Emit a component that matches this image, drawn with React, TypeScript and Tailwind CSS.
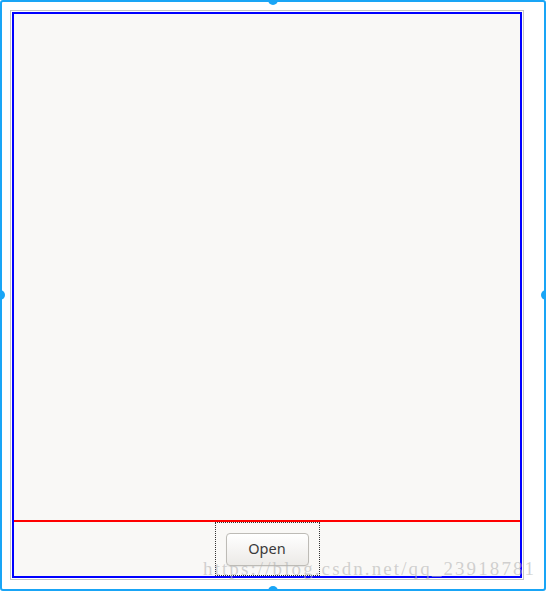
import React from "react";

export default function App() {
  return (
    <div className="relative w-[546px] h-[591px] overflow-hidden bg-white">
      <div className="absolute inset-0 rounded-[3px] border-2 border-[#19a5f6]" />
      {/* handles */}
      <div className="absolute left-[268px] top-[-5px] w-[10px] h-[10px] rounded-full bg-[#19a5f6]" />
      <div className="absolute left-[268px] top-[586px] w-[10px] h-[10px] rounded-full bg-[#19a5f6]" />
      <div className="absolute left-[-5px] top-[290px] w-[10px] h-[10px] rounded-full bg-[#19a5f6]" />
      <div className="absolute left-[541px] top-[290px] w-[10px] h-[10px] rounded-full bg-[#19a5f6]" />

      <div className="flex pl-[10px] pt-[10px]">
        <div className="w-[514px] h-[570px] border border-[#c4c4c4] p-[1px] flex">
          <div className="flex-1 flex flex-col border-2 border-[#0000ff] bg-[#f9f8f6]">
            <div className="flex-1" />
            <div className="h-[2px] bg-[#ff0000]" />
            <div className="h-[54px] flex justify-center">
              <div className="w-[105px] h-full border border-dotted border-[#333] flex items-center justify-center">
                <button className="w-[83px] h-[33px] rounded-[4px] border border-[#bdbbb6] bg-gradient-to-b from-[#ffffff] to-[#eceae7] text-[14.5px] text-[#3a3a3a] shadow-[0_1px_1px_rgba(0,0,0,0.08)] [font-family:'Noto_Sans',sans-serif]">
                  Open
                </button>
              </div>
            </div>
          </div>
        </div>
      </div>

      <div className="absolute left-[203px] top-[557px] text-[19px] leading-[24px] tracking-[2.1px] text-[#b4b4b4]/60 [font-family:'Liberation_Serif',serif] pointer-events-none whitespace-nowrap">
        https://blog.csdn.net/qq_23918781
      </div>
    </div>
  );
}
